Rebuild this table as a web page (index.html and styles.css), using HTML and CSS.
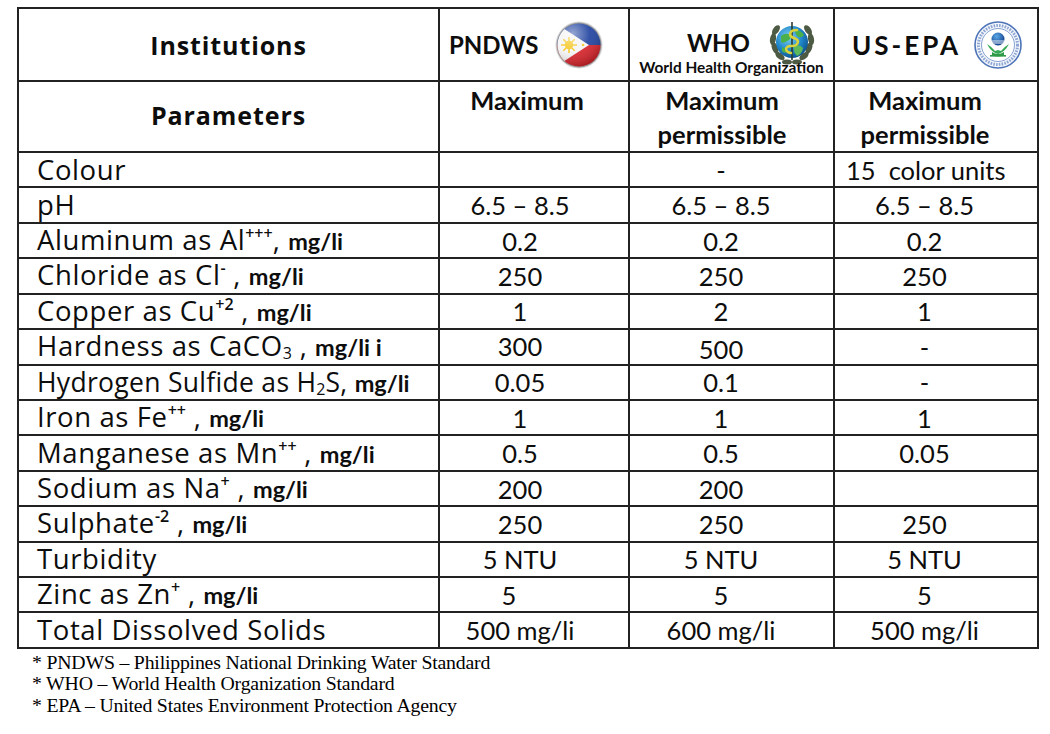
FILE: index.html
```html
<!DOCTYPE html>
<html lang="en">
<head>
<meta charset="utf-8">
<title>Drinking Water Standards</title>
<link rel="stylesheet" href="styles.css">
</head>
<body>
<div class="page">
<table class="standards">
  <colgroup>
    <col class="c-param"><col class="c-pn"><col class="c-who"><col class="c-epa">
  </colgroup>
  <thead>
    <tr class="h1">
      <th class="hcell-left">Institutions</th>
      <th class="inst inst-pn">
        <div class="inst-row">
          <span class="inst-name">PNDWS</span>
          <svg class="logo" width="48" height="48" viewBox="0 0 48 48" aria-hidden="true">
            <defs>
              <clipPath id="flagclip"><circle cx="24" cy="24" r="21.5"/></clipPath>
              <radialGradient id="gloss" cx="0.35" cy="0.25" r="0.8">
                <stop offset="0" stop-color="#fff" stop-opacity="0.55"/>
                <stop offset="0.5" stop-color="#fff" stop-opacity="0.1"/>
                <stop offset="1" stop-color="#000" stop-opacity="0.25"/>
              </radialGradient>
            </defs>
            <circle cx="24" cy="24" r="23.5" fill="#d6d6d6"/>
            <circle cx="24" cy="24" r="22.5" fill="#9a9a9a"/>
            <g clip-path="url(#flagclip)">
              <rect x="0" y="0" width="48" height="24" fill="#1c3f9e"/>
              <rect x="0" y="24" width="48" height="24" fill="#d61f26"/>
              <polygon points="0,2 34,24 0,46" fill="#f4f4f4"/>
              <circle cx="14" cy="24" r="4.2" fill="#f5c518"/>
              <g stroke="#f5c518" stroke-width="1.6">
                <line x1="14" y1="16" x2="14" y2="32"/>
                <line x1="6" y1="24" x2="22" y2="24"/>
                <line x1="8.3" y1="18.3" x2="19.7" y2="29.7"/>
                <line x1="8.3" y1="29.7" x2="19.7" y2="18.3"/>
              </g>
              <circle cx="5" cy="11" r="1.3" fill="#f5c518"/>
              <circle cx="5" cy="37" r="1.3" fill="#f5c518"/>
              <circle cx="28" cy="24" r="1.3" fill="#f5c518"/>
              <circle cx="24" cy="24" r="22" fill="url(#gloss)"/>
            </g>
          </svg>
        </div>
      </th>
      <th class="inst inst-who">
        <div class="inst-row">
          <span class="inst-name">WHO</span>
          <svg class="logo" width="50" height="50" viewBox="0 0 50 50" aria-hidden="true">
            <defs>
              <radialGradient id="globe" cx="0.4" cy="0.35" r="0.7">
                <stop offset="0" stop-color="#7fd0f5"/>
                <stop offset="0.6" stop-color="#1f86c8"/>
                <stop offset="1" stop-color="#0d4f8a"/>
              </radialGradient>
            </defs>
            <g fill="#4d5a44">
              <ellipse cx="8" cy="30" rx="3" ry="6" transform="rotate(-20 8 30)"/>
              <ellipse cx="6" cy="21" rx="3" ry="6" transform="rotate(10 6 21)"/>
              <ellipse cx="9" cy="12" rx="3" ry="5.5" transform="rotate(35 9 12)"/>
              <ellipse cx="13" cy="38" rx="3" ry="5.5" transform="rotate(-50 13 38)"/>
              <ellipse cx="42" cy="30" rx="3" ry="6" transform="rotate(20 42 30)"/>
              <ellipse cx="44" cy="21" rx="3" ry="6" transform="rotate(-10 44 21)"/>
              <ellipse cx="41" cy="12" rx="3" ry="5.5" transform="rotate(-35 41 12)"/>
              <ellipse cx="37" cy="38" rx="3" ry="5.5" transform="rotate(50 37 38)"/>
              <ellipse cx="20" cy="44" rx="5" ry="2.5"/>
              <ellipse cx="30" cy="44" rx="5" ry="2.5"/>
            </g>
            <circle cx="25" cy="24" r="16" fill="url(#globe)"/>
            <path d="M14 18 q5 -4 9 -1 q2 4 -3 6 q-3 3 -6 1 z" fill="#4bb04a"/>
            <path d="M28 12 q6 0 9 5 q-2 3 -6 2 q-3 -3 -3 -7 z" fill="#4bb04a"/>
            <path d="M27 28 q6 -2 9 2 q-1 6 -6 8 q-4 -4 -3 -10 z" fill="#5cb85a"/>
            <path d="M15 29 q4 1 5 5 q-3 2 -5 -1 z" fill="#4bb04a"/>
            <line x1="25" y1="4" x2="25" y2="42" stroke="#2c3b2c" stroke-width="1.6"/>
            <path d="M30 12 c-8 0 -9 6 -3 8 c6 2 5 8 -3 8 c-7 0 -6 6 0 7" fill="none" stroke="#d9d23a" stroke-width="2.6" stroke-linecap="round"/>
          </svg>
        </div>
        <div class="inst-sub">World Health Organization</div>
      </th>
      <th class="inst inst-epa">
        <div class="inst-row">
          <span class="inst-name">US-EPA</span>
          <svg class="logo" width="50" height="50" viewBox="0 0 50 50" aria-hidden="true">
            <defs>
              <radialGradient id="ball" cx="0.4" cy="0.3" r="0.7">
                <stop offset="0" stop-color="#5aa7e6"/>
                <stop offset="1" stop-color="#123f8c"/>
              </radialGradient>
            </defs>
            <circle cx="25" cy="25" r="23" fill="#f3f6fb" stroke="#4e74b8" stroke-width="1.6"/>
            <circle cx="25" cy="25" r="19.5" fill="none" stroke="#8ea6d3" stroke-width="3" stroke-dasharray="1.6 1.2"/>
            <circle cx="25" cy="25" r="16.5" fill="#fff" stroke="#6b8cc6" stroke-width="0.8"/>
            <circle cx="25" cy="19" r="6.5" fill="url(#ball)"/>
            <g stroke="#fff" stroke-width="0.9">
              <line x1="19" y1="21" x2="31" y2="21"/>
              <line x1="19.5" y1="23" x2="30.5" y2="23"/>
            </g>
            <path d="M14 24 q4 8 11 10 q7 -2 11 -10 q-5 3 -8 7 l-3 -1 l-3 1 q-3 -4 -8 -7 z" fill="#34a853"/>
            <path d="M19 32 q6 4 12 0 l0 3 q-6 3 -12 0 z" fill="#2e9a47"/>
            <rect x="17" y="35" width="16" height="1.6" fill="#2e9a47"/>
          </svg>
        </div>
      </th>
    </tr>
    <tr class="h2">
      <th class="hcell-left param-head">Parameters</th>
      <th class="hmax hmax-pn">Maximum</th>
      <th class="hmax hmax-who">Maximum<br>permissible</th>
      <th class="hmax hmax-epa">Maximum<br>permissible</th>
    </tr>
  </thead>
  <tbody>
    <tr>
      <td class="param">Colour</td>
      <td class="v pn"></td>
      <td class="v who">-</td>
      <td class="v epa left">15&nbsp; color units</td>
    </tr>
    <tr>
      <td class="param">pH</td>
      <td class="v pn">6.5 – 8.5</td>
      <td class="v who">6.5 – 8.5</td>
      <td class="v epa">6.5 – 8.5</td>
    </tr>
    <tr>
      <td class="param">Aluminum as Al<sup>+++</sup>, <span class="unit">mg/li</span></td>
      <td class="v pn">0.2</td>
      <td class="v who">0.2</td>
      <td class="v epa">0.2</td>
    </tr>
    <tr>
      <td class="param">Chloride as Cl<sup>-</sup> , <span class="unit">mg/li</span></td>
      <td class="v pn">250</td>
      <td class="v who">250</td>
      <td class="v epa">250</td>
    </tr>
    <tr>
      <td class="param">Copper as Cu<sup>+2</sup> , <span class="unit">mg/li</span></td>
      <td class="v pn">1</td>
      <td class="v who">2</td>
      <td class="v epa">1</td>
    </tr>
    <tr>
      <td class="param">Hardness as CaCO<sub>3</sub> , <span class="unit">mg/li i</span></td>
      <td class="v pn up">300</td>
      <td class="v who down">500</td>
      <td class="v epa">-</td>
    </tr>
    <tr>
      <td class="param tight">Hydrogen Sulfide as H<sub>2</sub>S, <span class="unit">mg/li</span></td>
      <td class="v pn">0.05</td>
      <td class="v who">0.1</td>
      <td class="v epa">-</td>
    </tr>
    <tr>
      <td class="param">Iron as Fe<sup>++</sup> , <span class="unit">mg/li</span></td>
      <td class="v pn">1</td>
      <td class="v who">1</td>
      <td class="v epa">1</td>
    </tr>
    <tr>
      <td class="param">Manganese as Mn<sup>++</sup> , <span class="unit">mg/li</span></td>
      <td class="v pn">0.5</td>
      <td class="v who">0.5</td>
      <td class="v epa">0.05</td>
    </tr>
    <tr>
      <td class="param">Sodium as Na<sup>+</sup> , <span class="unit">mg/li</span></td>
      <td class="v pn">200</td>
      <td class="v who">200</td>
      <td class="v epa"></td>
    </tr>
    <tr>
      <td class="param">Sulphate<sup>-2</sup> , <span class="unit">mg/li</span></td>
      <td class="v pn">250</td>
      <td class="v who">250</td>
      <td class="v epa">250</td>
    </tr>
    <tr>
      <td class="param">Turbidity</td>
      <td class="v pn">5 NTU</td>
      <td class="v who">5 NTU</td>
      <td class="v epa">5 NTU</td>
    </tr>
    <tr>
      <td class="param">Zinc as Zn<sup>+</sup> , <span class="unit">mg/li</span></td>
      <td class="v pn zl">5</td>
      <td class="v who">5</td>
      <td class="v epa">5</td>
    </tr>
    <tr>
      <td class="param">Total Dissolved Solids</td>
      <td class="v pn">500 mg/li</td>
      <td class="v who">600 mg/li</td>
      <td class="v epa">500 mg/li</td>
    </tr>
  </tbody>
</table>
<ul class="notes">
  <li>* PNDWS – Philippines National Drinking Water Standard</li>
  <li>* WHO – World Health Organization Standard</li>
  <li>* EPA – United States Environment Protection Agency</li>
</ul>
</div>
</body>
</html>
```

FILE: styles.css
```css
html, body {
  margin: 0;
  padding: 0;
  background: #ffffff;
}

.page {
  padding: 7px 0 0 17px;
}

.standards {
  border-collapse: collapse;
  table-layout: fixed;
  width: 1020px;
  color: #0d0d0d;
}

.c-param { width: 421px; }
.c-pn { width: 190px; }
.c-who { width: 205px; }
.c-epa { width: 204px; }

.standards th,
.standards td {
  border: 2px solid #222;
  padding: 0;
}

/* header rows */
.h1 { height: 73px; }
.h2 { height: 71px; }

.standards .hcell-left {
  font-family: "Open Sans", "DejaVu Sans", sans-serif;
  font-weight: 700;
  font-size: 25px;
  letter-spacing: 0.9px;
  text-align: center;
  vertical-align: middle;
}

.standards .param-head {
  padding-bottom: 4px;
}

.standards .inst {
  font-family: Lato, "Open Sans", sans-serif;
  font-weight: 700;
  vertical-align: middle;
  text-align: left;
}

.inst-row {
  display: flex;
  align-items: center;
}

.inst-name {
  font-size: 24px;
  line-height: 30px;
}

.inst-pn .inst-row { padding-left: 9px; gap: 17px; }
.inst-who .inst-row { justify-content: flex-end; padding-right: 16px; gap: 17px; margin-top: 5px; }
.inst-epa .inst-row { padding-left: 17px; gap: 12px; }
.inst-epa .inst-name { font-size: 26px; letter-spacing: 3px; }

.logo { display: block; flex: none; }

.inst-sub {
  font-size: 15.4px;
  line-height: 16px;
  text-align: center;
  margin: -9px 0 2px 0;
}

.standards .hmax {
  font-family: Lato, "Open Sans", sans-serif;
  font-weight: 700;
  font-size: 25.5px;
  line-height: 34px;
  vertical-align: top;
  text-align: center;
  padding-top: 1px;
}
.standards .hmax-pn { padding-right: 14px; }
.standards .hmax-who { padding-right: 19px; }
.standards .hmax-epa { padding-right: 22px; }

/* data rows */
.standards tbody tr { height: 35.43px; }

.standards .param {
  font-family: "Open Sans", "DejaVu Sans", sans-serif;
  font-size: 27.5px;
  letter-spacing: 0.6px;
  line-height: 30px;
  padding-left: 18px;
  white-space: nowrap;
  vertical-align: middle;
}

.standards .param.tight {
  font-size: 26.5px;
  letter-spacing: 0.3px;
}

.param sup {
  font-size: 16px;
  vertical-align: 11px;
  line-height: 0;
  font-weight: 600;
  letter-spacing: 0;
}

.param sub {
  font-size: 16px;
  vertical-align: -3px;
  line-height: 0;
  letter-spacing: 0;
}

.unit {
  font-family: Lato, "Open Sans", sans-serif;
  font-weight: 700;
  font-size: 23.5px;
  letter-spacing: 0;
}

.standards .v {
  font-family: Lato, "Open Sans", sans-serif;
  font-size: 25.5px;
  line-height: 30px;
  text-align: center;
  vertical-align: middle;
  white-space: nowrap;
}

.standards .v.pn { padding-right: 28px; }
.standards .v.who { padding-right: 21px; }
.standards .v.epa { padding-right: 23px; }
.standards .v.epa.left { text-align: left; padding-left: 11px; padding-right: 0; }
.standards .v.zl { padding-right: 50px; }

.standards .v.up { vertical-align: top; padding-top: 1px; }
.standards .v.down { vertical-align: bottom; }

/* footnotes */
.notes {
  list-style: none;
  margin: 3px 0 0 15px;
  padding: 0;
  font-family: "Liberation Serif", "Times New Roman", serif;
  font-size: 19.8px;
  line-height: 21.5px;
  color: #000;
  letter-spacing: -0.2px;
}
```
